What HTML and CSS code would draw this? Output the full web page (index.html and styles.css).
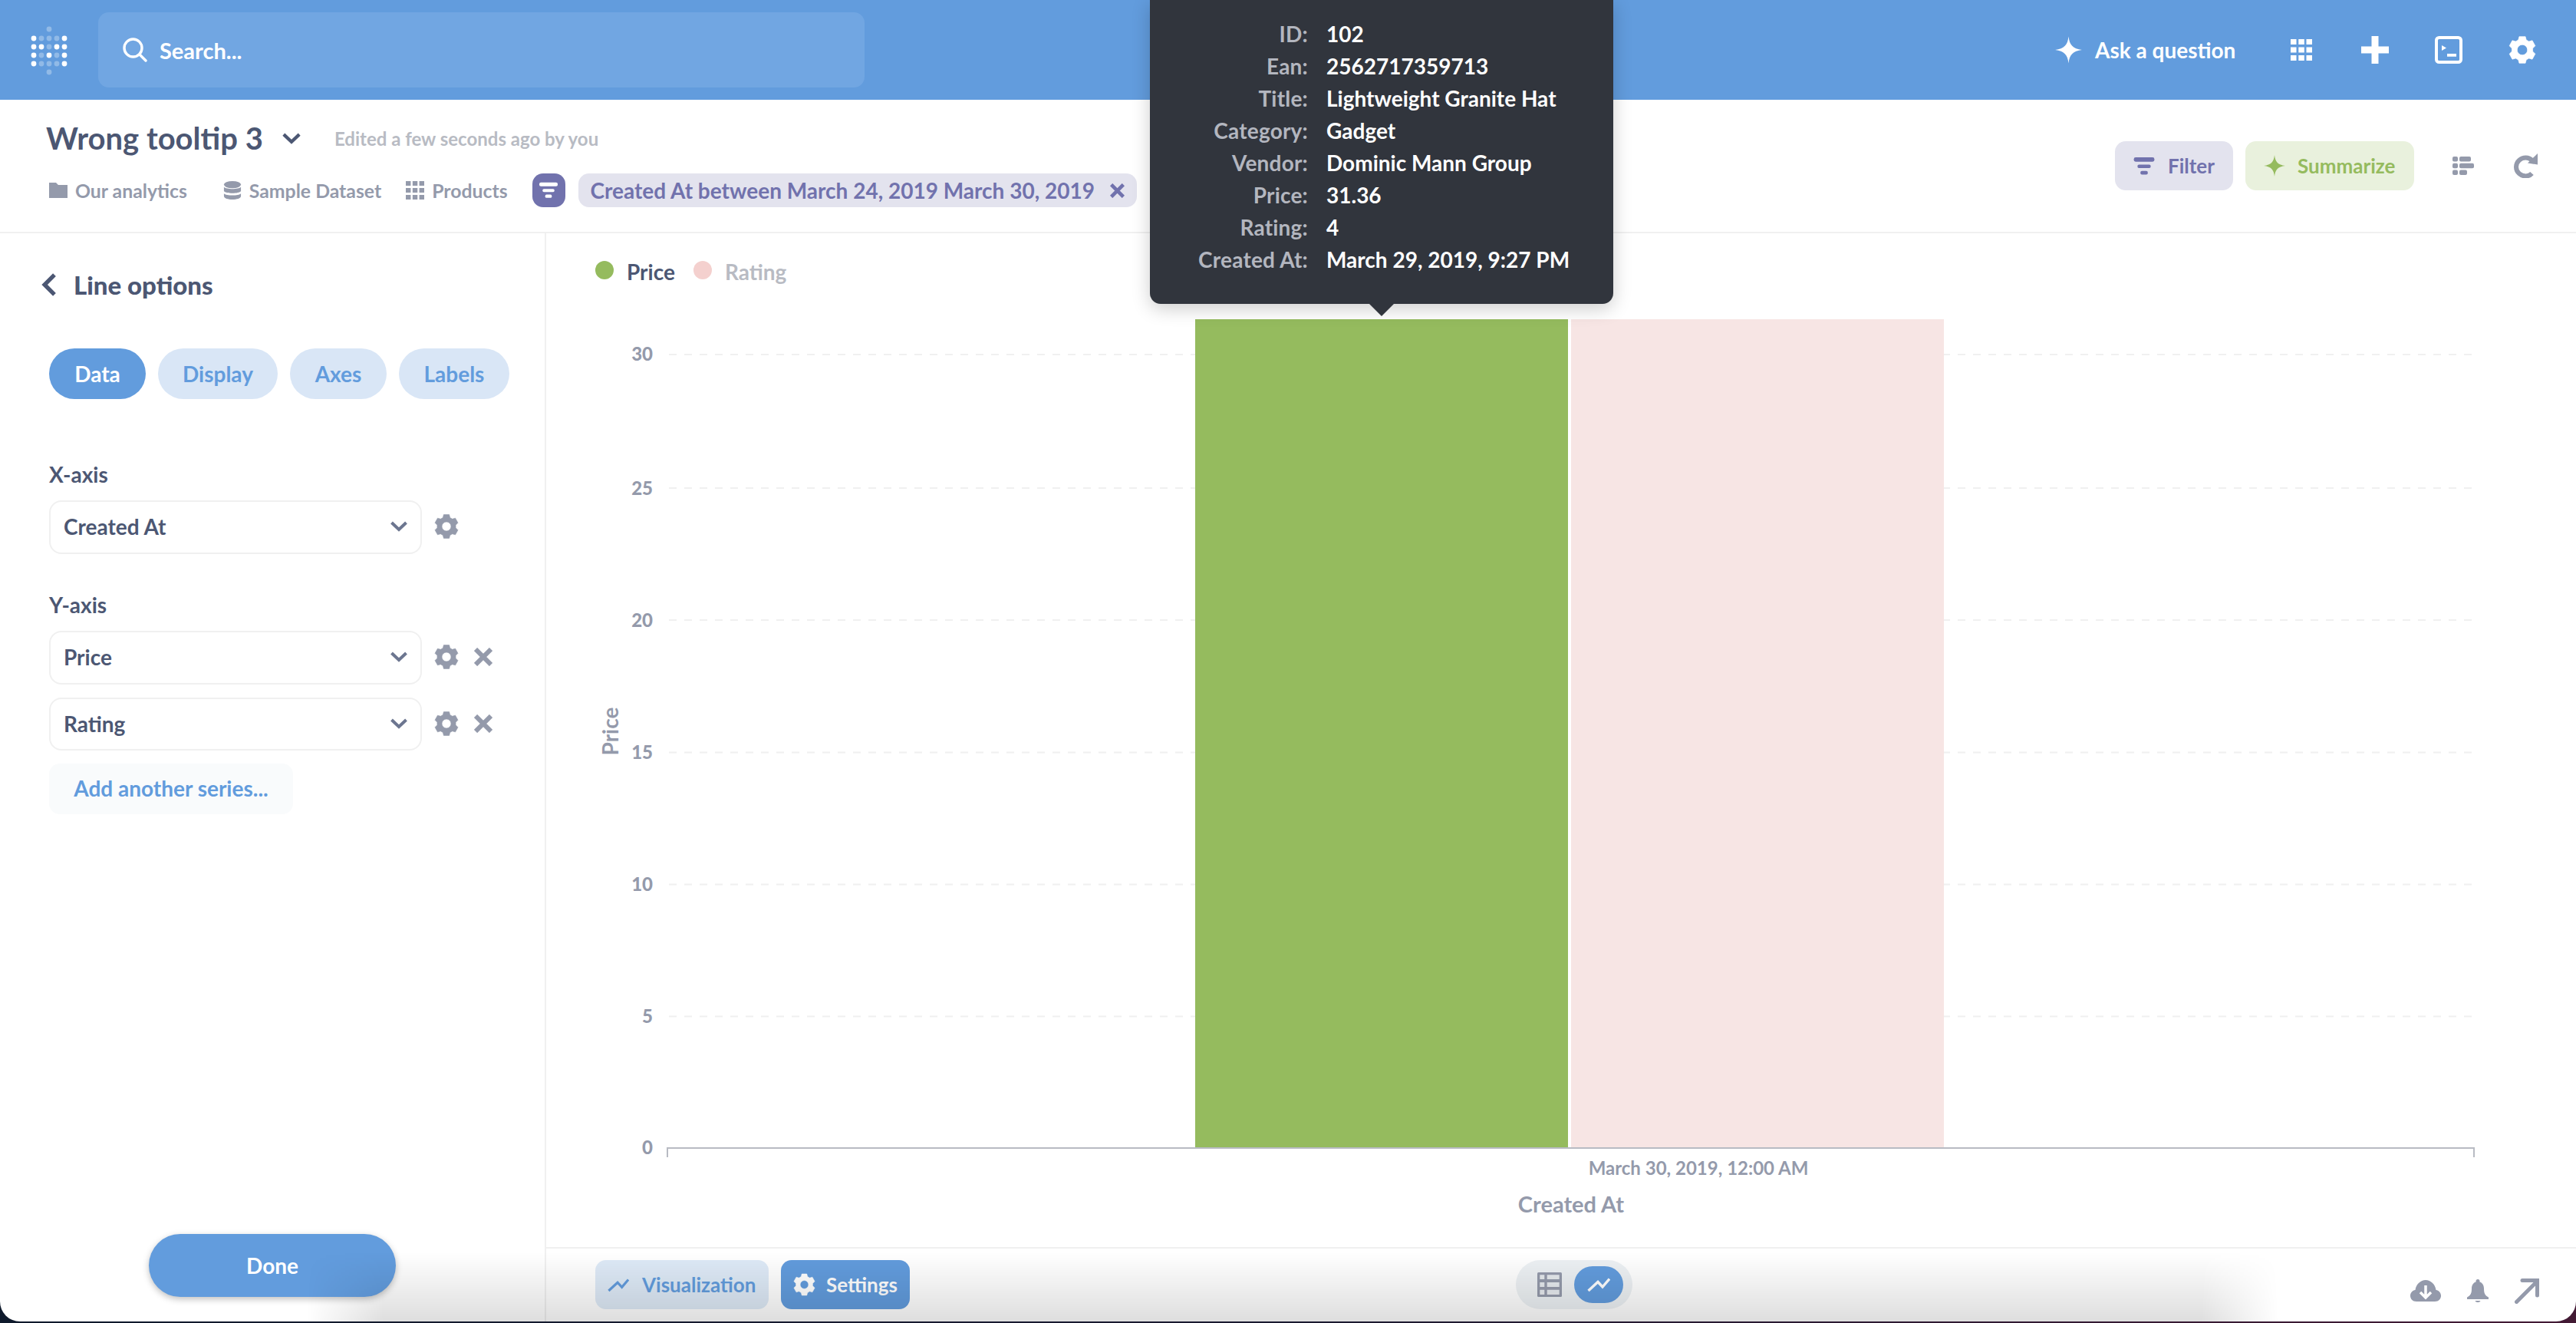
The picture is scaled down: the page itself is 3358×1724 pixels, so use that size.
FILE: index.html
```html
<!DOCTYPE html>
<html lang="en">
<head>
<meta charset="utf-8">
<title>Wrong tooltip 3</title>
<link rel="stylesheet" href="styles.css">
</head>
<body>
<svg class="defs" width="0" height="0" aria-hidden="true">
  <symbol id="gear" viewBox="0 0 16 16"><path fill-rule="evenodd" stroke="currentColor" stroke-width=".3" stroke-linejoin="round" d="M5.7 2.25 6.2.3H9.8l.5 1.95 1.53.88 1.95-.56 1.7 3.09-1.45 1.45v1.78l1.45 1.45-1.7 3.09-1.95-.56-1.53.88-.5 1.95H6.2l-.5-1.95-1.53-.88-1.95.56-1.7-3.09 1.45-1.45V7.11L.52 5.66l1.7-3.09 1.95.56ZM8 5a3 3 0 1 0 0 6 3 3 0 1 0 0-6Z"/></symbol>
  <symbol id="star" viewBox="0 0 16 16"><path d="M8 0C8.5 5 10.6 7.4 16 8 10.6 8.6 8.5 11 8 16 7.5 11 5.4 8.6 0 8 5.400 7.400 7.500 5 8 0Z"/></symbol>
  <symbol id="chev" viewBox="0 0 22 14"><path fill="none" stroke="currentColor" stroke-width="4" d="M1.500 2 11 11 20.500 2"/></symbol>
  <symbol id="close" viewBox="0 0 24 24"><path fill="none" stroke="currentColor" stroke-width="6" d="M2 2 22 22M22 2 2 22"/></symbol>
  <symbol id="grid" viewBox="0 0 28 28"><path d="M0 0h7.500v7H0zM10.300 0h7.500v7h-7.500zM20.500 0H28v7h-7.500zM0 10.500h7.500v7H0zM10.300 10.500h7.500v7h-7.500zM20.500 10.500H28v7h-7.500zM0 21h7.500v7H0zM10.300 21h7.500v7h-7.500zM20.500 21H28v7h-7.500z"/></symbol>
  <symbol id="funnel" viewBox="0 0 28 24"><rect x="0" y="0" width="28" height="6" rx="2.500"/><rect x="5" y="10" width="18" height="4.500" rx="2"/><rect x="9" y="18.500" width="10" height="5" rx="2"/></symbol>
  <symbol id="trend" viewBox="0 0 30 20"><path fill="none" stroke="currentColor" stroke-width="3.400" d="M1.500 18 14 6.500 20 13 29 2.500"/></symbol>
</svg>

<div class="app">
  <header class="nav">
    <svg class="logo" viewBox="0 0 48 70" aria-label="Metabase">
      <g fill="#fff">
        <circle cx="4" cy="20" r="3.400"/><circle cx="44" cy="20" r="3.400"/>
        <circle cx="4" cy="31" r="3.400"/><circle cx="14" cy="31" r="3.400"/><circle cx="34" cy="31" r="3.400"/><circle cx="44" cy="31" r="3.400"/>
        <circle cx="4" cy="42" r="3.400"/><circle cx="24" cy="42" r="3.400"/><circle cx="44" cy="42" r="3.400"/>
        <circle cx="4" cy="53" r="3.400"/><circle cx="44" cy="53" r="3.400"/>
      </g>
      <g fill="#fff" opacity=".3">
        <circle cx="24" cy="8" r="3.400"/><circle cx="14" cy="20" r="3.400"/><circle cx="24" cy="20" r="3.400"/><circle cx="34" cy="20" r="3.400"/>
        <circle cx="24" cy="31" r="3.400"/><circle cx="14" cy="42" r="3.400"/><circle cx="34" cy="42" r="3.400"/>
        <circle cx="14" cy="53" r="3.400"/><circle cx="24" cy="53" r="3.400"/><circle cx="34" cy="53" r="3.400"/><circle cx="24" cy="64" r="3.400"/>
      </g>
    </svg>
    <div class="search">
      <svg class="search-ic" viewBox="0 0 32 32"><circle cx="13.500" cy="13.500" r="11.500" fill="none" stroke="#fff" stroke-width="3.400"/><path d="M22 22 30 30" stroke="#fff" stroke-width="3.400" stroke-linecap="round"/></svg>
      <span>Search...</span>
    </div>
    <div class="nav-right">
      <svg class="ic-star-nav"><use href="#star"/></svg>
      <span class="ask">Ask a question</span>
      <svg class="ic-grid-nav"><use href="#grid"/></svg>
      <svg class="ic-plus" viewBox="0 0 36 36"><path d="M13.500 0h9v13.500H36v9H22.500V36h-9V22.500H0v-9h13.500Z"/></svg>
      <svg class="ic-term" viewBox="0 0 36 36"><rect x="2" y="2" width="32" height="32" rx="3.500" fill="none" stroke="#fff" stroke-width="4"/><path d="M9 12l6 3.500L9 19ZM16 23h12v3.700H16Z"/></svg>
      <svg class="ic-gear-nav"><use href="#gear"/></svg>
    </div>
  </header>

  <section class="qbar">
    <div class="qbar-left">
      <div class="title-row">
        <h1 class="title">Wrong tooltip 3</h1>
        <svg class="title-chev"><use href="#chev"/></svg>
        <span class="edited">Edited a few seconds ago by you</span>
      </div>
      <div class="crumbs">
        <span class="crumb crumb-a">
          <svg class="crumb-ic" viewBox="0 0 24 24"><path d="M0 2h9l3 3h12v17H0Z"/></svg>Our analytics
        </span>
        <span class="crumb crumb-b">
          <svg class="crumb-ic" viewBox="0 0 24 26"><ellipse cx="12" cy="5" rx="12" ry="5"/><path d="M0 8.500c3 3.500 21 3.500 24 0V14c-3 4-21 4-24 0ZM0 17.500c3 3.500 21 3.500 24 0V21c0 6.500-24 6.500-24 0Z"/></svg>Sample Dataset
        </span>
        <span class="crumb crumb-c">
          <svg class="crumb-ic"><use href="#grid"/></svg>Products
        </span>
        <span class="filter-dot"><svg class="filter-dot-ic"><use href="#funnel"/></svg></span>
        <span class="filter-pill">Created At between March 24, 2019 March 30, 2019<svg class="pill-x"><use href="#close"/></svg></span>
      </div>
    </div>
    <div class="qbar-right">
      <button class="act act-filter"><svg class="act-ic-f"><use href="#funnel"/></svg>Filter</button>
      <button class="act act-sum"><svg class="act-ic-s"><use href="#star"/></svg>Summarize</button>
      <svg class="ic-list" viewBox="0 0 28 24"><rect y="0" width="7" height="6.500" rx="2"/><rect x="9" y="0" width="15" height="6.500" rx="2"/><rect y="8.700" width="7" height="6.500" rx="2"/><rect x="9" y="8.700" width="19" height="6.500" rx="2"/><rect y="17.500" width="7" height="6.500" rx="2"/><rect x="9" y="17.500" width="10" height="6.500" rx="2"/></svg>
      <svg class="ic-refresh" viewBox="0 0 32 32"><path fill="none" stroke="currentColor" stroke-width="6" d="M24 9.500C21.500 6.500 18.500 5.500 15.500 5.500 9.500 5.500 3 10 3 17.500S9.500 29.500 15.500 29.500c3 0 5.800-1 8-3.500"/><path d="M31 0v14.500L18 12.500Z"/></svg>
    </div>
  </section>

  <main class="main">
    <aside class="side">
      <div class="side-head">
        <svg class="back" viewBox="0 0 18 28"><path fill="none" stroke="currentColor" stroke-width="5" d="M15.500 2 3.500 14 15.500 26"/></svg>
        <span>Line options</span>
      </div>
      <div class="tabs">
        <span class="tab tab-on">Data</span>
        <span class="tab tab-display">Display</span>
        <span class="tab tab-axes">Axes</span>
        <span class="tab tab-labels">Labels</span>
      </div>
      <div class="field-label field-x">X-axis</div>
      <div class="row">
        <div class="select"><span>Created At</span><svg class="sel-chev"><use href="#chev"/></svg></div>
        <svg class="row-gear"><use href="#gear"/></svg>
      </div>
      <div class="field-label field-y">Y-axis</div>
      <div class="row">
        <div class="select"><span>Price</span><svg class="sel-chev"><use href="#chev"/></svg></div>
        <svg class="row-gear"><use href="#gear"/></svg>
        <svg class="row-x"><use href="#close"/></svg>
      </div>
      <div class="row">
        <div class="select select-short"><span>Rating</span><svg class="sel-chev"><use href="#chev"/></svg></div>
        <svg class="row-gear"><use href="#gear"/></svg>
        <svg class="row-x"><use href="#close"/></svg>
      </div>
      <div class="add">Add another series...</div>
      <button class="done">Done</button>
    </aside>

    <div class="content">
      <div class="chart">
        <div class="legend">
          <span class="dot dot-green"></span><span class="leg leg-on">Price</span>
          <span class="dot dot-pink"></span><span class="leg leg-off">Rating</span>
        </div>
        <svg class="plot" viewBox="712 368 2646 1257" preserveAspectRatio="none">
          <g class="gridlines">
            <path d="M872 462H3226M872 636H3226M872 808H3226M872 980.500H3226M872 1152.500H3226M872 1324.500H3226"/>
          </g>
          <rect x="1558" y="416" width="486" height="1079" fill="#95bb5e"/>
          <rect x="2048" y="416" width="486" height="1079" fill="#f7e5e4"/>
          <path class="axis" d="M870 1508V1496H3225V1508"/>
          <g class="ylab">
            <text x="851" y="470">30</text>
            <text x="851" y="644.500">25</text>
            <text x="851" y="816.500">20</text>
            <text x="851" y="988.500">15</text>
            <text x="851" y="1160.500">10</text>
            <text x="851" y="1332.500">5</text>
            <text x="851" y="1504">0</text>
          </g>
          <text class="xtick" x="2214" y="1531">March 30, 2019, 12:00 AM</text>
          <text class="xlab" x="2048" y="1580">Created At</text>
          <text class="rotlab" transform="translate(806 953) rotate(-90)">Price</text>
        </svg>
      </div>
      <footer class="foot">
        <button class="fbtn fbtn-vis"><svg class="fbtn-trend"><use href="#trend"/></svg>Visualization</button>
        <button class="fbtn fbtn-set"><svg class="fbtn-gear"><use href="#gear"/></svg>Settings</button>
        <div class="toggle">
          <svg class="tbl" viewBox="0 0 32 32"><rect width="32" height="32" rx="1.500" fill="#949aab"/><path fill="#e6eaee" d="M3.300 3.300h6v5.700h-6zM12.700 3.300h16v5.700h-16zM3.300 13h6v6h-6zM12.700 13h16v6h-16zM3.300 22.700h6v6.300h-6zM12.700 22.700h16v6.300h-16z"/></svg>
          <span class="tog-on"><svg class="tog-trend"><use href="#trend"/></svg></span>
        </div>
        <div class="foot-right">
          <svg class="ic-cloud" viewBox="0 0 40 28"><path fill-rule="evenodd" d="M8 28C3 28 0 24.500 0 20.500 0 16.500 3 13.500 6.500 13 7.500 5.500 13.500 0 20 0s12.500 5.500 13.500 13C37 13.500 40 16.500 40 20.500 40 24.500 37 28 32 28Z"/><path fill="none" stroke="#fff" stroke-width="3.500" d="M20 7V22M13 16l7 7 7-7"/></svg>
          <svg class="ic-bell" viewBox="0 0 28 30"><circle cx="14" cy="2.500" r="2.500"/><path d="M14 3c5 0 8 4 8 9 0 6 1 9 6 11.500V26H0v-2.500C5 21 6 18 6 12c0-5 3-9 8-9ZM10.500 28h7c-1 2.700-6 2.700-7 0Z"/></svg>
          <svg class="ic-arrow" viewBox="0 0 32 33"><path fill="none" stroke="currentColor" stroke-width="5" stroke-linecap="round" d="M2.500 30.500 29 4M10 2.500H29.500V22"/></svg>
        </div>
      </footer>
    </div>
  </main>

  <div class="tooltip">
    <span class="tk">ID:</span><span class="tv">102</span>
    <span class="tk">Ean:</span><span class="tv">2562717359713</span>
    <span class="tk">Title:</span><span class="tv">Lightweight Granite Hat</span>
    <span class="tk">Category:</span><span class="tv">Gadget</span>
    <span class="tk">Vendor:</span><span class="tv">Dominic Mann Group</span>
    <span class="tk">Price:</span><span class="tv">31.36</span>
    <span class="tk">Rating:</span><span class="tv">4</span>
    <span class="tk">Created At:</span><span class="tv">March 29, 2019, 9:27 PM</span>
  </div>
  <div class="shade"></div>
</div>
</body>
</html>
```

FILE: styles.css
```css
* { box-sizing: border-box; }
html, body { margin: 0; padding: 0; height: 100%; }
body {
  background: linear-gradient(90deg, #0f1a2c 0%, #1a1a30 50%, #431a34 100%);
  font-family: Lato, "Open Sans", sans-serif;
  font-weight: 700;
  color: #4c5773;
  overflow: hidden;
}
button { font: inherit; border: 0; padding: 0; }
svg { display: block; flex: none; fill: currentColor; }
.defs { position: absolute; }

.app {
  position: relative;
  height: 1722px;
  background: #fff;
  border-radius: 0 0 26px 26px;
  overflow: hidden;
  display: flex;
  flex-direction: column;
}

/* top nav */
.nav {
  flex: none;
  height: 130px;
  background: #629cdd;
  display: flex;
  align-items: center;
  padding: 0 52px 0 40px;
  color: #fff;
}
.logo { width: 48px; height: 70px; }
.search {
  width: 999px;
  height: 98px;
  margin-left: 40px;
  background: #71a6e2;
  border-radius: 14px;
  display: flex;
  align-items: center;
  padding-left: 32px;
  font-size: 29px;
}
.search-ic { width: 32px; height: 32px; margin-right: 16px; }
.nav-right { margin-left: auto; display: flex; align-items: center; }
.ic-star-nav { width: 35px; height: 36px; margin-right: 17px; }
.ask { font-size: 28px; width: 183px; white-space: nowrap; }
.ic-grid-nav { width: 28px; height: 28px; margin-left: 72px; }
.ic-plus { width: 36px; height: 36px; margin-left: 64px; }
.ic-term { width: 36px; height: 36px; margin-left: 60px; }
.ic-gear-nav { width: 36px; height: 36px; margin-left: 60px; }

/* question bar */
.qbar {
  flex: none;
  height: 174px;
  border-bottom: 2px solid #f0f0f0;
  display: flex;
  justify-content: space-between;
  padding: 0 49px 0 60px;
}
.qbar-left { padding-top: 28px; }
.title-row { display: flex; align-items: center; height: 44px; }
.title { margin: 0; font-size: 40px; font-weight: 700; width: 308px; white-space: nowrap; }
.title-chev { width: 24px; height: 15px; }
.edited { margin-left: 44px; font-size: 24px; color: #b8bbc3; }
.crumbs { display: flex; align-items: center; height: 44px; margin: 24px 0 0 4px; font-size: 24.800px; color: #949aab; }
.crumb { display: flex; align-items: center; gap: 10px; }
.crumb-ic { width: 24px; height: 24px; }
.crumb-a { margin-right: 47px; }
.crumb-b { margin-right: 32px; }
.crumb-c { margin-right: 32px; }
.filter-dot {
  width: 43px; height: 44px;
  background: #7172ad;
  border-radius: 14px;
  display: flex; align-items: center; justify-content: center;
  color: #fff;
}
.filter-dot-ic { width: 24px; height: 22px; }
.filter-pill {
  height: 44px;
  margin-left: 17px;
  padding: 0 16px;
  width: 728px;
  background: #e3e3ee;
  color: #7172ad;
  border-radius: 14px;
  font-size: 28px;
  display: flex; align-items: center; justify-content: space-between;
  white-space: nowrap;
}
.pill-x { width: 19px; height: 19px; }
.qbar-right { display: flex; align-items: center; }
.act {
  height: 64px;
  border-radius: 14px;
  font-size: 26px;
  display: flex; align-items: center;
}
.act-filter { width: 154px; background: #e3e3ee; color: #7172ad; padding-left: 24px; gap: 17px; }
.act-sum { width: 220px; margin-left: 16px; background: #e9f1dd; color: #95bb5e; padding-left: 24px; gap: 16px; }
.act-ic-f { width: 28px; height: 23px; }
.act-ic-s { width: 28px; height: 32px; }
.ic-list { width: 28px; height: 24px; margin-left: 50px; color: #949aab; }
.ic-refresh { width: 32px; height: 32px; margin-left: 52px; color: #949aab; }

/* main split */
.main { flex: 1; min-height: 0; display: flex; }
.side {
  flex: none;
  width: 712px;
  border-right: 2px solid #f0f0f0;
  display: flex;
  flex-direction: column;
  padding: 45px 0 32px 64px;
}
.side-head { display: flex; align-items: center; height: 44px; font-size: 33px; font-weight: 900; margin-left: -10px; gap: 22px; }
.back { width: 20px; height: 30px; }
.tabs { display: flex; gap: 16px; margin-top: 61px; }
.tab {
  height: 66px;
  border-radius: 33px;
  font-size: 28px;
  display: flex; align-items: center; justify-content: center;
  background: #d9e6f6;
  color: #629cdd;
}
.tab-on { width: 126px; background: #629cdd; color: #fff; }
.tab-display { width: 156px; }
.tab-axes { width: 126px; }
.tab-labels { width: 144px; }
.field-label { font-size: 28px; height: 34px; line-height: 34px; }
.field-x { margin-top: 81px; }
.field-y { margin-top: 49px; }
.row { display: flex; align-items: center; margin-top: 17px; }
.select {
  width: 486px;
  height: 70px;
  border: 2px solid #f0f0f0;
  border-radius: 16px;
  display: flex; align-items: center; justify-content: space-between;
  padding: 0 17px 2px;
  font-size: 28px;
}
.select-short { height: 69px; }
.sel-chev { width: 22px; height: 14px; color: #6c7690; }
.row-gear { width: 32px; height: 32px; margin: 0 0 2px 16px; color: #949aab; }
.row-x { width: 24px; height: 24px; margin: 0 0 2px 20px; color: #949aab; }
.add {
  width: 318px;
  height: 66px;
  margin-top: 17px;
  padding-bottom: 2px;
  border-radius: 14px;
  background: #f9fbfc;
  color: #629cdd;
  font-size: 28px;
  display: flex; align-items: center; justify-content: center;
}
.done {
  width: 322px;
  height: 82px;
  margin-top: auto;
  margin-left: 130px;
  border-radius: 41px;
  background: #629cdd;
  color: #fff;
  font-size: 28px;
  box-shadow: 0 3px 8px rgba(0,0,0,.25);
}

/* chart */
.content { flex: 1; min-width: 0; display: flex; flex-direction: column; }
.chart { flex: 1; min-height: 0; display: flex; flex-direction: column; }
.legend { flex: none; height: 64px; padding: 32px 0 0 64px; display: flex; align-items: center; font-size: 28px; }
.dot { width: 24px; height: 24px; border-radius: 50%; margin-right: 17px; }
.dot-green { background: #95bb5e; }
.dot-pink { background: #f4d0ce; }
.leg { margin-top: 3px; }
.leg-on { width: 87px; }
.leg-off { color: #b8bbc3; }
.plot { flex: 1; min-height: 0; width: 100%; }
.plot text { font-family: Lato, sans-serif; font-weight: 700; fill: #949aab; }
.gridlines path { stroke: #f0f0f0; stroke-width: 2; stroke-dasharray: 10 10; fill: none; }
.axis { fill: none; stroke: #b8bbc3; stroke-width: 2; }
.ylab text { font-size: 24px; text-anchor: end; font-weight: 900; }
.xtick { font-size: 24px; text-anchor: middle; }
.xlab { font-size: 29px; text-anchor: middle; }
.rotlab { font-size: 28px; text-anchor: middle; }

/* footer */
.foot {
  flex: none;
  height: 97px;
  border-top: 2px solid #f0f0f0;
  display: flex;
  align-items: flex-start;
  padding: 15px 48px 0 64px;
}
.fbtn {
  height: 64px;
  border-radius: 14px;
  font-size: 26px;
  display: flex; align-items: center;
}
.fbtn-vis { width: 226px; background: #deeaf7; color: #629cdd; padding-left: 16px; gap: 17px; }
.fbtn-set { width: 168px; margin-left: 16px; background: #629cdd; color: #fff; padding-left: 16px; gap: 14px; }
.fbtn-trend { width: 28px; height: 19px; }
.fbtn-gear { width: 29px; height: 30px; }
.toggle {
  width: 152px; height: 64px;
  margin-left: 790px;
  border-radius: 32px;
  background: #edf1f4;
  display: flex; align-items: center;
  padding-left: 28px;
}
.tbl { width: 32px; height: 32px; }
.tog-on {
  width: 64px; height: 48px;
  margin-left: 16px;
  border-radius: 24px;
  background: #629cdd;
  color: #fff;
  display: flex; align-items: center; justify-content: center;
}
.tog-trend { width: 30px; height: 20px; }
.foot-right { margin-left: auto; height: 64px; display: flex; align-items: center; padding-top: 16px; color: #949aab; }
.ic-cloud { width: 40px; height: 28px; }
.ic-bell { width: 28px; height: 30px; margin-left: 34px; }
.ic-arrow { width: 32px; height: 33px; margin-left: 34px; }

/* tooltip over chart */
.tooltip {
  position: absolute;
  top: 0;
  left: 1499px;
  width: 604px;
  height: 396px;
  padding: 23px 0 0 62px;
  background: #31353d;
  border-radius: 0 0 14px 14px;
  box-shadow: 0 6px 24px rgba(0,0,0,.2);
  display: grid;
  grid-template-columns: 144px auto;
  grid-auto-rows: 42px;
  column-gap: 24px;
  align-content: start;
  align-items: center;
  font-size: 28px;
  font-weight: 700;
}
.tooltip::after {
  content: "";
  position: absolute;
  left: 286px;
  bottom: -16px;
  border-style: solid;
  border-width: 16px 16px 0 16px;
  border-color: #31353d transparent transparent transparent;
}
.tk { color: #b3b6bf; text-align: right; white-space: nowrap; letter-spacing: .2px; }
.tv { color: #fff; white-space: nowrap; }

/* dock shadow over the bottom of the window */
.shade {
  position: absolute;
  left: 400px;
  width: 2570px;
  bottom: 0;
  height: 90px;
  background: linear-gradient(180deg, rgba(0,0,0,0) 0%, rgba(0,0,0,.13) 100%);
  -webkit-mask-image: linear-gradient(90deg, transparent 0, #000 100px, #000 2470px, transparent 100%);
  mask-image: linear-gradient(90deg, transparent 0, #000 100px, #000 2470px, transparent 100%);
  pointer-events: none;
}
```
